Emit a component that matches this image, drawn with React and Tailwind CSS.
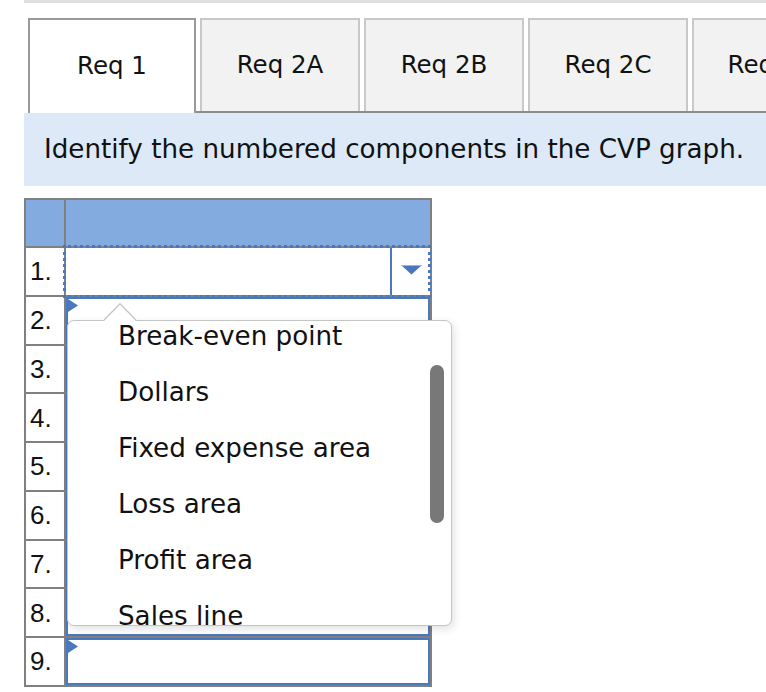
import React from "react";

const tabs = ["Req 2A", "Req 2B", "Req 2C", "Req 2D"];
const options = ["Break-even point", "Dollars", "Fixed expense area", "Loss area", "Profit area", "Sales line"];
const rows = [1, 2, 3, 4, 5, 6, 7, 8, 9];

const Flag = () => (
  <svg className="absolute left-0 top-0" width="11" height="14" viewBox="0 0 11 14">
    <polygon points="0,0 10,6.5 0,13" fill="#4a78c0" />
  </svg>
);

const App = () => {
  return (
    <div className="w-[766px] h-[692px] overflow-hidden bg-white font-['DejaVu_Sans',Verdana,sans-serif] text-[#111]">
      <div className="ml-[24px] h-[3px] bg-[#e0e0e0]"></div>

      {/* Tabs */}
      <div className="mt-[15px] ml-[28px] flex items-end w-[900px]">
        <div className="w-[168px] h-[95px] shrink-0 bg-white border-2 border-b-0 border-[#999] flex items-center justify-center text-[24.5px]">
          Req 1
        </div>
        <div className="flex-1 flex gap-[4px] pl-[4px] border-b-2 border-[#8c8c8c]">
          {tabs.map((t) => (
            <div
              key={t}
              className="w-[160px] h-[93px] shrink-0 bg-[#f2f2f2] border-2 border-b-0 border-[#c8c8c8] flex items-center justify-center text-[24.5px]"
            >
              {t}
            </div>
          ))}
        </div>
      </div>

      {/* Instructions */}
      <div className="ml-[24px] h-[73px] bg-[#dde9f7] flex items-center pl-[20px] text-[26.2px]">
        Identify the numbered components in the CVP graph.
      </div>

      {/* Table */}
      <div className="relative mt-[12px] ml-[24px] w-[408px] border-2 border-[#808080]">
        <div className="flex h-[46px] bg-[#84abdf]">
          <div className="w-[40px] border-r-2 border-[#808080]"></div>
          <div className="flex-1"></div>
        </div>

        {rows.map((n) => (
          <div key={n} className="flex h-[48.75px] border-t-2 border-[#808080]">
            <div className="w-[40px] shrink-0 border-r-2 border-[#808080] flex items-center pl-[4px] font-['Liberation_Sans',Arial,sans-serif] text-[26px] leading-none">
              {n}.
            </div>
            {n === 1 ? (
              <div className="relative flex-1 flex">
                <div className="flex-1"></div>
                <div className="w-[2px] bg-[#4a78c0]"></div>
                <div className="w-[38px] flex items-center justify-center pb-[3px]">
                  <svg width="21" height="10" viewBox="0 0 21 10">
                    <polygon points="0,0 21,0 10.5,9.5" fill="#4a76c0" />
                    <rect x="0" y="0" width="21" height="1" fill="#9bb4dc" />
                  </svg>
                </div>
                <div className="absolute -left-[3px] -top-[3px] -right-[1px] -bottom-[3px] z-10 border-[3px] border-dotted border-[#4a78c0]"></div>
              </div>
            ) : (
              <div className="relative flex-1 border-2 border-[#4a78c0] bg-white">
                <Flag />
              </div>
            )}
          </div>
        ))}

        {/* Dropdown menu */}
        <svg className="absolute left-[78px] top-[103px] z-30" width="34" height="19" viewBox="0 0 34 19">
          <polygon points="0,18 16,1 32,18" fill="#fff" />
          <polyline points="0,17 16,0.8 32,17" fill="none" stroke="#c4c4c4" strokeWidth="1.3" />
        </svg>
        <div className="absolute left-[41px] top-[120px] z-20 w-[385px] h-[306px] bg-white border border-[#c4c4c4] rounded-[7px] shadow-[2px_3px_8px_rgba(0,0,0,0.12)] overflow-hidden">
          <div className="-mt-[12px] pl-[50px] text-[26.2px]">
            {options.map((o) => (
              <div key={o} className="h-[56px] flex items-center">
                {o}
              </div>
            ))}
          </div>
          <div className="absolute right-[7px] top-[44px] w-[14px] h-[158px] rounded-full bg-[#787878]"></div>
        </div>
      </div>
    </div>
  );
};

export default App;
